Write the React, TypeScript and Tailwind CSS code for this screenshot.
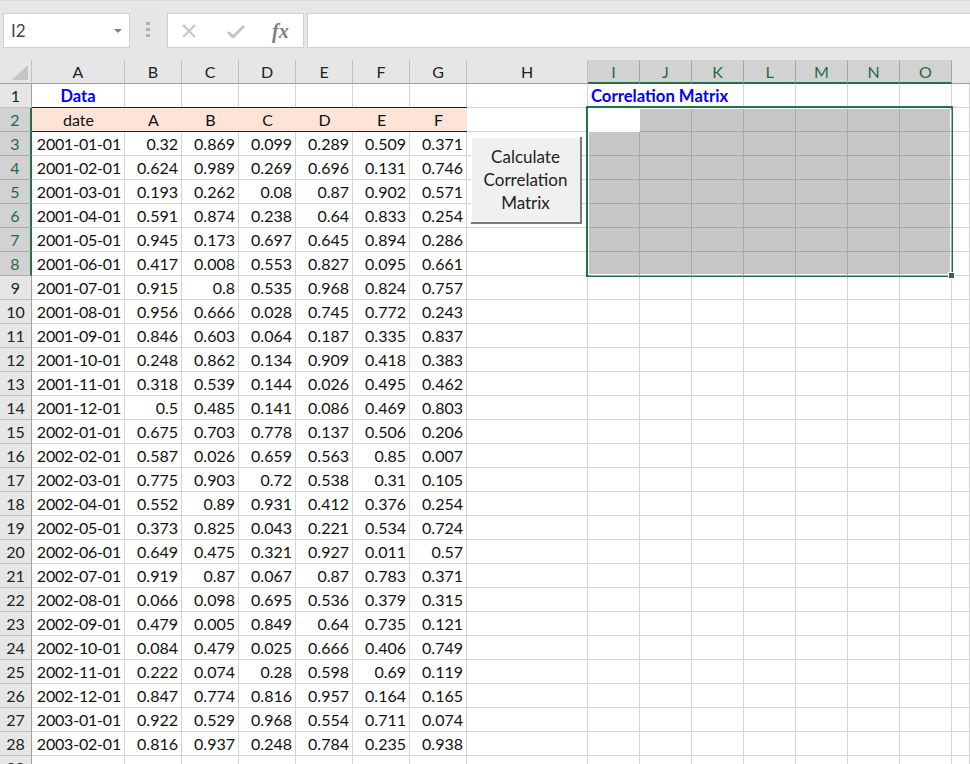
const rows: (string | number)[][] = [
  ['2001-01-01', 0.32, 0.869, 0.099, 0.289, 0.509, 0.371],
  ['2001-02-01', 0.624, 0.989, 0.269, 0.696, 0.131, 0.746],
  ['2001-03-01', 0.193, 0.262, 0.08, 0.87, 0.902, 0.571],
  ['2001-04-01', 0.591, 0.874, 0.238, 0.64, 0.833, 0.254],
  ['2001-05-01', 0.945, 0.173, 0.697, 0.645, 0.894, 0.286],
  ['2001-06-01', 0.417, 0.008, 0.553, 0.827, 0.095, 0.661],
  ['2001-07-01', 0.915, 0.8, 0.535, 0.968, 0.824, 0.757],
  ['2001-08-01', 0.956, 0.666, 0.028, 0.745, 0.772, 0.243],
  ['2001-09-01', 0.846, 0.603, 0.064, 0.187, 0.335, 0.837],
  ['2001-10-01', 0.248, 0.862, 0.134, 0.909, 0.418, 0.383],
  ['2001-11-01', 0.318, 0.539, 0.144, 0.026, 0.495, 0.462],
  ['2001-12-01', 0.5, 0.485, 0.141, 0.086, 0.469, 0.803],
  ['2002-01-01', 0.675, 0.703, 0.778, 0.137, 0.506, 0.206],
  ['2002-02-01', 0.587, 0.026, 0.659, 0.563, 0.85, 0.007],
  ['2002-03-01', 0.775, 0.903, 0.72, 0.538, 0.31, 0.105],
  ['2002-04-01', 0.552, 0.89, 0.931, 0.412, 0.376, 0.254],
  ['2002-05-01', 0.373, 0.825, 0.043, 0.221, 0.534, 0.724],
  ['2002-06-01', 0.649, 0.475, 0.321, 0.927, 0.011, 0.57],
  ['2002-07-01', 0.919, 0.87, 0.067, 0.87, 0.783, 0.371],
  ['2002-08-01', 0.066, 0.098, 0.695, 0.536, 0.379, 0.315],
  ['2002-09-01', 0.479, 0.005, 0.849, 0.64, 0.735, 0.121],
  ['2002-10-01', 0.084, 0.479, 0.025, 0.666, 0.406, 0.749],
  ['2002-11-01', 0.222, 0.074, 0.28, 0.598, 0.69, 0.119],
  ['2002-12-01', 0.847, 0.774, 0.816, 0.957, 0.164, 0.165],
  ['2003-01-01', 0.922, 0.529, 0.968, 0.554, 0.711, 0.074],
  ['2003-02-01', 0.816, 0.937, 0.248, 0.784, 0.235, 0.938],
  ['', '', '', '', '', '', ''],
]

const gridCols = 'grid grid-cols-[32px_93px_57px_57px_57px_57px_57px_57px_121px_52px_52px_52px_52px_52px_52px_52px_18px]'
const cell = 'h-6 border-r border-b border-[#d4d4d4] leading-[24px] overflow-hidden whitespace-nowrap'

function HeaderCol({ label, active }: { label: string; active?: boolean }) {
  return (
    <div className={`h-6 text-center leading-[24px] ${active ? 'border-r border-b-2 bg-[#d2d2d2] text-[#1f6b46] border-r-[#a8a8a8] border-b-[#217346]' : 'border-r border-b bg-[#e6e6e6] text-[#222] border-r-[#c0c0c0] border-b-[#a0a0a0]'}`}>
      {label}
    </div>
  )
}

function RowHead({ n }: { n: number }) {
  const active = n >= 2 && n <= 8
  return (
    <div className={`h-6 border-b text-center leading-[24px] ${active ? 'bg-[#d2d2d2] text-[#1f6b46] border-b-[#a8a8a8] border-r-2 border-r-[#217346]' : 'bg-[#e6e6e6] text-[#222] border-b-[#c0c0c0] border-r border-r-[#a0a0a0]'}`}>
      {n}
    </div>
  )
}

function Blank({ n = 1 }: { n?: number }) {
  return (
    <>
      {Array.from({ length: n }).map((_, i) => (
        <div key={i} className={cell} />
      ))}
    </>
  )
}

export default function App() {
  return (
    <div className="relative h-[764px] w-[970px] overflow-hidden bg-white font-['Lato',sans-serif] text-[16px] text-[#111]">
      {/* formula bar */}
      <div className="flex h-[60px] items-start border-t border-t-[#d8d8d8] bg-[#e6e6e6] pt-[12px]">
        <div className="ml-[3px] flex h-[35px] w-[127px] items-center justify-between border border-[#d0d0d0] bg-white pl-[7px] pr-[7px] text-[#444]">
          <span className="text-[17px]">I2</span>
          <span className="h-0 w-0 border-x-[4px] border-t-[4px] border-x-transparent border-t-[#808080]" />
        </div>
        <div className="ml-[16px] mt-[9px] flex w-[6px] flex-col gap-[3px]">
          <span className="h-[3px] w-[4px] bg-[#b0b0b0]" />
          <span className="h-[3px] w-[4px] bg-[#b0b0b0]" />
          <span className="h-[3px] w-[4px] bg-[#b0b0b0]" />
        </div>
        <div className="ml-[15px] flex h-[35px] w-[137px] items-center border border-[#d0d0d0] bg-white">
          <svg width="14" height="14" viewBox="0 0 14 14" className="ml-[14px]">
            <path d="M1 1 L13 13 M13 1 L1 13" stroke="#c4c4c4" strokeWidth="2" fill="none" />
          </svg>
          <svg width="18" height="14" viewBox="0 0 18 14" className="ml-[31px]">
            <path d="M1 8 L6 13 L17 2" stroke="#c4c4c4" strokeWidth="3" fill="none" />
          </svg>
          <span className="ml-[27px] font-['Liberation_Serif',serif] text-[20px] font-bold italic text-[#808080]">fx</span>
        </div>
        <div className="ml-[3px] h-[35px] flex-1 border border-r-0 border-[#d0d0d0] bg-white" />
      </div>

      {/* sheet */}
      <div className={gridCols}>
        {/* column headers */}
        <div className="relative h-6 border-r border-b border-r-[#c0c0c0] border-b-[#a0a0a0] bg-[#e6e6e6]">
          <span className="absolute bottom-[3px] right-[3px] h-0 w-0 border-b-[15px] border-l-[16px] border-b-[#c4c4c4] border-l-transparent" />
        </div>
        {['A', 'B', 'C', 'D', 'E', 'F', 'G', 'H'].map((c) => (
          <HeaderCol key={c} label={c} />
        ))}
        {['I', 'J', 'K', 'L', 'M', 'N', 'O'].map((c) => (
          <HeaderCol key={c} label={c} active />
        ))}
        <div className="h-6 border-b border-b-[#a0a0a0] bg-[#e6e6e6]" />

        {/* row 1 */}
        <RowHead n={1} />
        <div className={`${cell} text-center text-[16.5px] font-bold text-[#0000ff]`}>Data</div>
        <Blank n={7} />
        <div className={`${cell} overflow-visible border-r-0 pl-[3px] text-[16.7px] font-bold text-[#0000ff]`}>Correlation Matrix</div>
        <div className={`${cell} border-r-0`} />
        <div className={cell} />
        <Blank n={5} />

        {/* row 2 */}
        <RowHead n={2} />
        {['date', 'A', 'B', 'C', 'D', 'E', 'F'].map((h) => (
          <div key={h} className="-mt-px h-[25px] border-t border-b border-[#222] bg-[#fde4d6] text-center leading-[24px]">
            {h}
          </div>
        ))}
        <Blank n={9} />

        {/* data rows */}
        {rows.map((r, i) => (
          <div key={i} className="contents">
            <RowHead n={i + 3} />
            {r.map((v, j) => (
              <div key={j} className={`${cell} pr-[3px] text-right ${j === 0 ? 'tracking-[-0.2px]' : ''}`}>
                {v}
              </div>
            ))}
            <Blank n={9} />
          </div>
        ))}
      </div>

      {/* button sits over the cells */}
      <div className="absolute left-[471px] top-[137px] flex h-[87px] w-[111px] flex-col items-center justify-center border-r-2 border-b-2 border-r-[#7a7a7a] border-b-[#7a7a7a] bg-[#f0f0f0] text-center text-[17px] leading-[23px] text-[#222] shadow-[inset_1px_1px_0_#ffffff]">
        <span>Calculate</span>
        <span>Correlation</span>
        <span>Matrix</span>
      </div>

      {/* selected range I2:O8 */}
      <div className="absolute left-[586px] top-[106px] h-[171px] w-[367px] border-2 border-[#217346]">
        <div className="grid h-full w-full grid-cols-[51px_52px_52px_52px_52px_52px_52px] grid-rows-[23px_24px_24px_24px_24px_24px_24px] border border-white bg-[#c6c6c6]">
          {Array.from({ length: 49 }).map((_, i) => (
            <div key={i} className={i === 0 ? 'bg-white' : 'border-r border-b border-[#a8a8a8]'} />
          ))}
        </div>
        <span className="absolute -bottom-[4px] -right-[4px] h-[7px] w-[7px] border border-white bg-[#217346]" />
      </div>
    </div>
  )
}
